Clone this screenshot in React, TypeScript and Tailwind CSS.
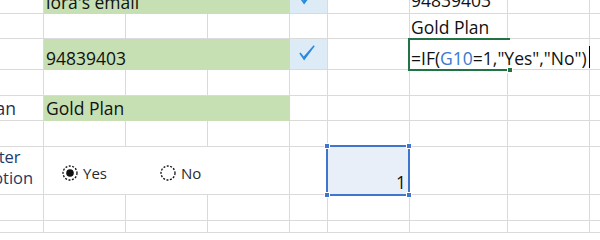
import React from "react";

const Check = () => (
  <svg width="16" height="16" viewBox="0 0 16 16" className="block shrink-0">
    <path d="M0.3 8.6 L1.6 7.6 L4.7 11.5 L14.6 0.3 L15.7 1.3 L5.1 15.6 Z" fill="#2a8ae0" />
  </svg>
);

const Radio = ({ on }: { on?: boolean }) => (
  <svg width="16" height="16" viewBox="0 0 16 16" className="block shrink-0">
    <circle cx="8" cy="8" r="7" fill="#fff" stroke="#111" strokeWidth="1.3" strokeDasharray="2 1.5" />
    <circle cx="8" cy="8" r="5.2" fill="#fff" />
    {on && <circle cx="8" cy="8" r="3.8" fill="#111" />}
  </svg>
);

function Blank({ last }: { last?: boolean }) {
  return last ? (
    <div className="border-b border-[#dadada]" />
  ) : (
    <div className="border-r border-b border-[#dadada]" />
  );
}

export default function App() {
  return (
    <div className="w-[600px] h-[233px] overflow-hidden bg-white font-['Open_Sans',sans-serif] text-[17.5px] leading-[20px] text-[#111]">
      <div className="grid grid-cols-[44px_82px_82px_82px_38px_82px_98px_82px_10px] grid-rows-[14px_25px_31px_26px_25px_26px_48px_26px_12px]">
        {/* Row 1 */}
        <Blank />
        <div className="col-span-3 flex items-end overflow-hidden whitespace-nowrap bg-[#c6e0b4] border-r border-b border-[#c6e0b4] pl-[2px] pb-[1px]">
          lora's email
        </div>
        <div className="flex items-end overflow-hidden bg-[#ddebf7] border-r border-b border-[#dadada] pl-[9px] pb-[8px]">
          <Check />
        </div>
        <Blank />
        <div className="flex items-end overflow-hidden whitespace-nowrap border-r border-b border-[#dadada] pl-[1px] pb-[3px]">
          94839403
        </div>
        <Blank />
        <Blank last />

        {/* Row 2 */}
        <Blank />
        <Blank />
        <Blank />
        <Blank />
        <Blank />
        <Blank />
        <div className="flex items-end overflow-hidden whitespace-nowrap border-r border-b border-[#dadada] pl-[1px] pb-[1px]">
          Gold Plan
        </div>
        <Blank />
        <Blank last />

        {/* Row 3 */}
        <Blank />
        <div className="col-span-3 flex items-end overflow-hidden whitespace-nowrap bg-[#c6e0b4] border-r border-b border-[#c6e0b4] pl-[2px] pb-[1px]">
          94839403
        </div>
        <div className="flex items-end overflow-hidden bg-[#ddebf7] border-r border-b border-[#dadada] pl-[9px] pb-[8px]">
          <Check />
        </div>
        <Blank />
        <div className="relative col-span-2 flex items-end whitespace-nowrap border-r border-b border-[#dadada] pl-[1px] pb-[1px]">
          <div className="absolute left-[-2px] top-[-1px] bottom-[-2px] w-[102px] border-t-2 border-l-2 border-b-2 border-[#217346]">
            <div className="absolute right-[-3px] bottom-[-4px] w-[6px] h-[6px] bg-[#217346] border border-white" />
          </div>
          <span className="relative">
            =IF(<span className="text-[#3b78d0]">G10</span>=1,"Yes","No")
          </span>
          <span className="relative inline-block w-px h-[22px] bg-black ml-[2px]" />
        </div>
        <Blank last />

        {/* Row 4 */}
        <Blank />
        <Blank />
        <Blank />
        <Blank />
        <Blank />
        <Blank />
        <Blank />
        <Blank />
        <Blank last />

        {/* Row 5 */}
        <div className="overflow-hidden border-r border-b border-[#dadada] pb-[2px] flex items-end">
          <div className="w-[16px] flex justify-end whitespace-nowrap text-[#1f2d4d]">Subscription Plan</div>
        </div>
        <div className="col-span-3 flex items-end overflow-hidden whitespace-nowrap bg-[#c6e0b4] border-r border-b border-[#c6e0b4] pl-[2px] pb-[2px]">
          Gold Plan
        </div>
        <Blank />
        <Blank />
        <Blank />
        <Blank />
        <Blank last />

        {/* Row 6 */}
        <Blank />
        <Blank />
        <Blank />
        <Blank />
        <Blank />
        <Blank />
        <Blank />
        <Blank />
        <Blank last />

        {/* Row 7 */}
        <div className="overflow-hidden border-r border-b border-[#dadada] text-[16.5px] leading-[21px] text-[#1f3864] whitespace-nowrap">
          <div className="ml-[-63px] -mt-[1px]">
            Newsletter
            <br />
            Subscription
          </div>
        </div>
        <div className="col-span-3 flex items-start border-r border-b border-[#dadada] pl-[18px] pt-[18px] text-[15px] leading-[16px] text-[#2a2a2a]">
          <div className="w-[98px] flex items-center gap-[5px]">
            <Radio on />
            <span>Yes</span>
          </div>
          <div className="flex items-center gap-[5px]">
            <Radio />
            <span>No</span>
          </div>
        </div>
        <Blank />
        <div className="relative flex items-end justify-end border-r border-b border-[#dadada] pr-[3px] pb-[2px]">
          <div className="absolute left-[-2px] top-[-2px] right-[-1px] bottom-[-2px] bg-[#e9eff9] border-2 border-[#3f74cf]">
            <div className="absolute left-[-4px] top-[-4px] w-[6px] h-[6px] bg-[#3f74cf] border border-white" />
            <div className="absolute right-[-4px] top-[-4px] w-[6px] h-[6px] bg-[#3f74cf] border border-white" />
            <div className="absolute left-[-4px] bottom-[-4px] w-[6px] h-[6px] bg-[#3f74cf] border border-white" />
            <div className="absolute right-[-4px] bottom-[-4px] w-[6px] h-[6px] bg-[#3f74cf] border border-white" />
          </div>
          <span className="relative">1</span>
        </div>
        <Blank />
        <Blank />
        <Blank last />

        {/* Row 8 */}
        <Blank />
        <Blank />
        <Blank />
        <Blank />
        <Blank />
        <Blank />
        <Blank />
        <Blank />
        <Blank last />

        {/* Row 9 */}
        <Blank />
        <Blank />
        <Blank />
        <Blank />
        <Blank />
        <Blank />
        <Blank />
        <Blank />
        <Blank last />
      </div>
    </div>
  );
}
